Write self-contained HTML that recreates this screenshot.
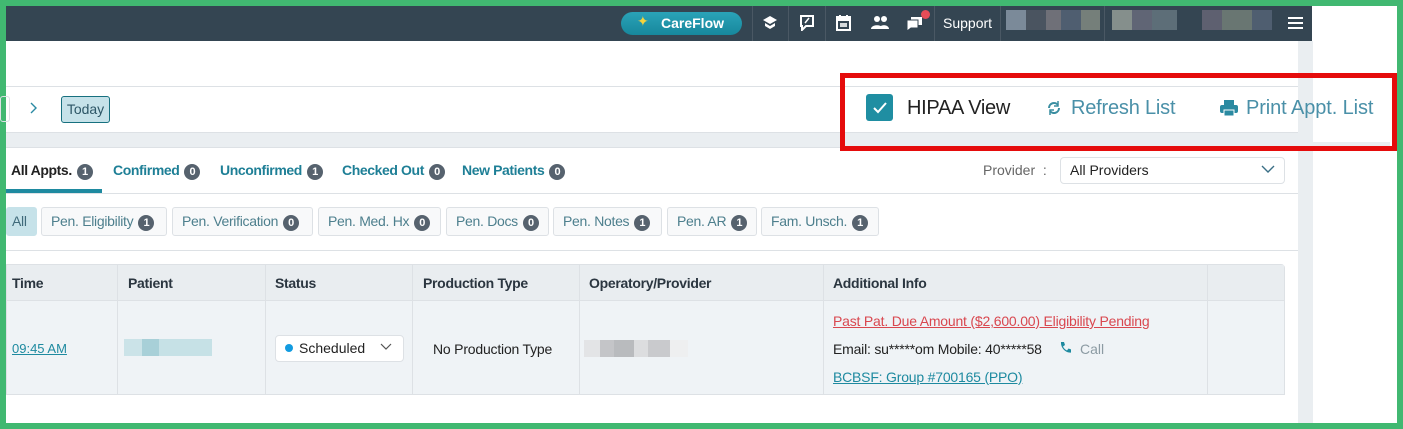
<!DOCTYPE html>
<html><head><style>
*{box-sizing:border-box;margin:0;padding:0}
body{width:1403px;height:429px;overflow:hidden;background:#fff;font-family:"Liberation Sans",sans-serif;position:relative;font-size:14px;color:#222}
.abs{position:absolute}
.b{display:inline-block;background:#56626e;color:#fff;border-radius:50%;width:16px;height:16px;font-size:11px;line-height:16px;text-align:center;font-weight:bold;vertical-align:0px;margin-left:5px}
.tab{position:absolute;top:162px;font-size:14px;font-weight:bold;color:#1e7f96;letter-spacing:-.4px;white-space:nowrap}
.chip{position:absolute;top:207px;height:29px;border:1px solid #dde1e5;border-radius:3px;background:#f8f9fa;color:#4d7f8d;font-size:14px;line-height:27px;padding:0 9px;letter-spacing:-.3px;white-space:nowrap}
.th{position:absolute;top:275px;font-weight:bold;font-size:14px;color:#2b3640;letter-spacing:-.3px}
.vl{position:absolute;width:1px;background:#dde1e5}
.ic{position:absolute;top:6px;height:35px;border-left:1px solid #4a5864}
</style></head><body>
<div class="abs" style="left:0;top:0;width:1403px;height:6px;background:#41b871"></div>
<div class="abs" style="left:0;top:0;width:6px;height:429px;background:#41b871"></div>
<div class="abs" style="right:0;top:0;width:6px;height:429px;background:#41b871"></div>
<div class="abs" style="left:0;bottom:0;width:1403px;height:6px;background:#41b871"></div>
<div class="abs" style="left:6px;top:6px;width:1306px;height:35px;background:#344552"></div>
<div class="abs" style="left:621px;top:12px;width:121px;height:23px;border-radius:12px;background:linear-gradient(#2aa3b8,#17879c);color:#fff;font-weight:bold;font-size:14px;line-height:23px;padding-left:40px">CareFlow</div>
<div class="abs" style="left:637px;top:13px;color:#f5d33b;font-size:14px">✦</div>
<div class="ic" style="left:752px"></div><div class="ic" style="left:788px"></div><div class="ic" style="left:825px"></div><div class="ic" style="left:934px"></div><div class="ic" style="left:1000px"></div><div class="ic" style="left:1104px"></div>
<svg class="abs" style="left:762px;top:15px" width="16" height="16"><path d="M8 1L15 5L8 9L1 5Z" fill="#fff"/><path d="M3 8v3l5 3 5-3V8l-5 3z" fill="#fff"/></svg>
<svg class="abs" style="left:799px;top:14px" width="16" height="17"><path d="M2 2h12v10H7l-4 4v-4H2z" fill="none" stroke="#fff" stroke-width="2"/><path d="M6 9l4-5" stroke="#fff" stroke-width="1.5"/></svg>
<svg class="abs" style="left:836px;top:14px" width="15" height="17"><rect x="1" y="3" width="13" height="13" fill="none" stroke="#fff" stroke-width="2"/><rect x="1" y="3" width="13" height="4" fill="#fff"/><path d="M4 1v3M11 1v3" stroke="#fff" stroke-width="2"/><rect x="4" y="9" width="7" height="4" fill="#fff" opacity=".8"/></svg>
<svg class="abs" style="left:871px;top:15px" width="18" height="15"><circle cx="6" cy="4" r="3" fill="#fff"/><circle cx="13" cy="4" r="3" fill="#fff"/><path d="M0 14c0-5 12-5 12 0zM8 14c0-5 10-5 10 0z" fill="#fff"/></svg>
<svg class="abs" style="left:906px;top:13px" width="18" height="19"><path d="M5 4h11v8H5z" fill="#fff"/><path d="M1 7h11v8H5l-4 3z" fill="#fff" stroke="#344552" stroke-width="1"/></svg>
<div class="abs" style="left:921px;top:10px;width:9px;height:9px;border-radius:50%;background:#e74c57"></div>
<div class="abs" style="left:943px;top:15px;color:#fff;font-size:14px">Support</div>
<div class="abs" style="left:1006px;top:10px;width:94px;height:20px;background:linear-gradient(90deg,#7b8a99 0 20px,#4a5460 20px 40px,#6f7078 40px 55px,#4f5e70 55px 75px,#757f7a 75px 94px)"></div>
<div class="abs" style="left:1112px;top:10px;width:160px;height:20px;background:linear-gradient(90deg,#858f8c 0 20px,#606575 20px 40px,#5d6e78 40px 65px,#344552 65px 90px,#5e6070 90px 110px,#697672 110px 140px,#4f5e70 140px 160px)"></div>
<div class="abs" style="left:1288px;top:17px;width:15px;height:2px;background:#fff;box-shadow:0 5px #fff,0 10px #fff"></div>
<div class="abs" style="left:1298px;top:41px;width:15px;height:382px;background:#eaeef1"></div>
<div class="abs" style="left:6px;top:86px;width:1292px;height:1px;background:#dde1e5"></div>
<div class="abs" style="left:0px;top:96px;width:10px;height:26px;border:1px solid #dde1e5;border-radius:3px"></div>
<svg class="abs" style="left:29px;top:101px" width="10" height="14"><path d="M2 2l5 5-5 5" fill="none" stroke="#2a8aa3" stroke-width="1.4"/></svg>
<div class="abs" style="left:61px;top:96px;width:49px;height:27px;border:1px solid #17707f;border-radius:3px;background:#c6e2e9;color:#2d5666;font-size:14px;line-height:25px;text-align:center">Today</div>
<div class="abs" style="left:6px;top:132px;width:1292px;height:16px;background:#eaeef1;border-top:1px solid #dde1e5;border-bottom:1px solid #dde1e5"></div>
<div class="abs" style="left:866px;top:94px;width:27px;height:27px;border-radius:3px;background:#1f8ea2"></div>
<svg class="abs" style="left:870px;top:98px" width="20" height="20"><path d="M4 10l4 4 8-9" fill="none" stroke="#fff" stroke-width="2"/></svg>
<div class="abs" style="left:907px;top:97px;font-size:20px;color:#222;letter-spacing:-.3px">HIPAA View</div>
<svg class="abs" style="left:1046px;top:99px" width="16" height="18"><path d="M3 9a5 5 0 0 1 9-3M13 9a5 5 0 0 1-9 3" fill="none" stroke="#3b8ea1" stroke-width="2"/><path d="M12 2v5h-4M4 16v-5h4" fill="none" stroke="#3b8ea1" stroke-width="1.5"/></svg>
<div class="abs" style="left:1071px;top:97px;font-size:20px;color:#4a90a8;letter-spacing:-.2px">Refresh List</div>
<svg class="abs" style="left:1219px;top:99px" width="20" height="18"><rect x="5" y="1" width="10" height="5" fill="#2b8aa1"/><rect x="1" y="6" width="18" height="8" rx="2" fill="#2b8aa1"/><rect x="5" y="11" width="10" height="6" fill="#2b8aa1" stroke="#fff"/></svg>
<div class="abs" style="left:1246px;top:97px;font-size:20px;color:#4a90a8;letter-spacing:-.1px">Print Appt. List</div>
<div class="abs" style="left:840px;top:73px;width:557px;height:78px;border:5px solid #e50c0c"></div>
<div class="abs" style="left:845px;top:142px;width:545px;height:4px;background:#eaeef1"></div>
<div class="tab" style="left:11px;color:#222">All Appts.<span class="b">1</span></div>
<div class="abs" style="left:6px;top:189px;width:96px;height:4px;background:#1e8aa0"></div>
<div class="tab" style="left:113px">Confirmed<span class="b">0</span></div>
<div class="tab" style="left:220px">Unconfirmed<span class="b">1</span></div>
<div class="tab" style="left:342px">Checked Out<span class="b">0</span></div>
<div class="tab" style="left:462px">New Patients<span class="b">0</span></div>
<div class="abs" style="left:983px;top:162px;color:#666;font-size:14px">Provider&nbsp;&nbsp;:</div>
<div class="abs" style="left:1060px;top:157px;width:225px;height:27px;border:1px solid #dde1e5;border-radius:4px;padding-left:9px;line-height:25px;font-size:14px;color:#222">All Providers</div>
<svg class="abs" style="left:1261px;top:164px" width="14" height="10"><path d="M1 2l6 6 6-6" fill="none" stroke="#3a6f86" stroke-width="1.4"/></svg>
<div class="abs" style="left:6px;top:193px;width:1292px;height:1px;background:#dde1e5"></div>
<div class="chip" style="left:6px;width:31px;background:#c6e2e9;border-color:#c6e2e9;color:#3f6a7a;padding-left:5px">All</div>
<div class="chip" style="left:41px;width:126px">Pen. Eligibility<span class="b">1</span></div>
<div class="chip" style="left:172px;width:141px">Pen. Verification<span class="b">0</span></div>
<div class="chip" style="left:318px;width:123px">Pen. Med. Hx<span class="b">0</span></div>
<div class="chip" style="left:446px;width:103px">Pen. Docs<span class="b">0</span></div>
<div class="chip" style="left:553px;width:109px">Pen. Notes<span class="b">1</span></div>
<div class="chip" style="left:667px">Pen. AR<span class="b">1</span></div>
<div class="chip" style="left:761px;width:118px">Fam. Unsch.<span class="b">1</span></div>
<div class="abs" style="left:6px;top:250px;width:1292px;height:1px;background:#dde1e5"></div>
<div class="abs" style="left:6px;top:264px;width:1279px;height:131px;border:1px solid #dde1e5;border-radius:0 4px 0 0;background:#eff3f6"></div>
<div class="abs" style="left:7px;top:265px;width:1277px;height:36px;background:#e9edf0;border-bottom:1px solid #dde1e5"></div>
<div class="vl" style="left:117px;top:265px;height:129px"></div>
<div class="vl" style="left:265px;top:265px;height:129px"></div>
<div class="vl" style="left:412px;top:265px;height:129px"></div>
<div class="vl" style="left:579px;top:265px;height:129px"></div>
<div class="vl" style="left:823px;top:265px;height:129px"></div>
<div class="vl" style="left:1207px;top:265px;height:129px"></div>
<div class="th" style="left:12px">Time</div>
<div class="th" style="left:128px">Patient</div>
<div class="th" style="left:275px">Status</div>
<div class="th" style="left:423px">Production Type</div>
<div class="th" style="left:589px">Operatory/Provider</div>
<div class="th" style="left:833px">Additional Info</div>
<div class="abs" style="left:12px;top:341px;color:#1e8aa0;text-decoration:underline;font-size:13px">09:45 AM</div>
<div class="abs" style="left:124px;top:339px;width:88px;height:17px;background:linear-gradient(90deg,#cbe3e8 0 18px,#a8d0d8 18px 35px,#c6e1e6 35px 88px)"></div>
<div class="abs" style="left:275px;top:335px;width:129px;height:27px;border:1px solid #dde1e5;border-radius:4px;background:#fff;padding-left:23px;line-height:25px;font-size:14px;color:#222">Scheduled</div>
<div class="abs" style="left:285px;top:344px;width:8px;height:8px;border-radius:50%;background:#129be0"></div>
<svg class="abs" style="left:380px;top:343px" width="12" height="9"><path d="M1 1l5 5 5-5" fill="none" stroke="#555" stroke-width="1.2"/></svg>
<div class="abs" style="left:433px;top:341px;font-size:14px;color:#222;letter-spacing:-.2px">No Production Type</div>
<div class="abs" style="left:584px;top:340px;width:104px;height:17px;background:linear-gradient(90deg,#e3e4e6 0 16px,#c4c5c8 16px 30px,#b9bbbe 30px 50px,#dcdddf 50px 64px,#c9cacd 64px 86px,#eeeff0 86px 104px)"></div>
<div class="abs" style="left:833px;top:313px;color:#d9474f;text-decoration:underline;font-size:14px;letter-spacing:-.2px">Past Pat. Due Amount ($2,600.00) Eligibility Pending</div>
<div class="abs" style="left:833px;top:341px;font-size:14px;color:#222;letter-spacing:-.2px">Email: su*****om Mobile: 40*****58</div>
<svg class="abs" style="left:1059px;top:341px" width="12" height="13"><path d="M2 1l3 0 1 3-2 1.5c1 2 2 3 4 4l1.5-2 3 1v3c-6 1-11-5-10.5-10.5z" fill="#1e8aa0"/></svg>
<div class="abs" style="left:1080px;top:341px;font-size:14px;color:#8c9ba3">Call</div>
<div class="abs" style="left:833px;top:369px;color:#1e8aa0;text-decoration:underline;font-size:14px;letter-spacing:-.2px">BCBSF: Group #700165 (PPO)</div>
</body></html>
